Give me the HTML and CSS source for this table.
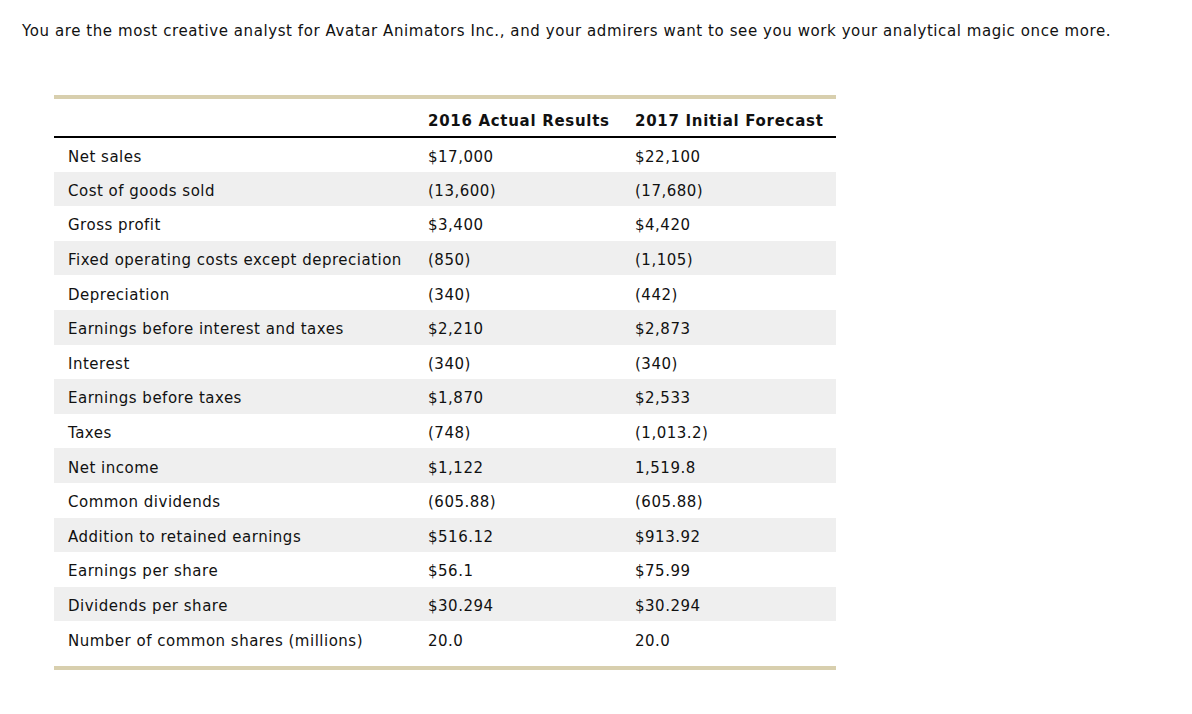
FILE: index.html
```html
<!DOCTYPE html>
<html>
<head>
<meta charset="utf-8">
<link rel="stylesheet" href="styles.css">
</head>
<body>
<div class="page">
  <p class="intro">You are the most creative analyst for Avatar Animators Inc., and your admirers want to see you work your analytical magic once more.</p>
  <div class="table-wrap">
    <table class="fin">
      <thead>
        <tr>
          <th class="c1"></th>
          <th class="c2">2016 Actual Results</th>
          <th class="c3">2017 Initial Forecast</th>
        </tr>
      </thead>
      <tbody>
        <tr><td>Net sales</td><td>$17,000</td><td>$22,100</td></tr>
        <tr><td>Cost of goods sold</td><td>(13,600)</td><td>(17,680)</td></tr>
        <tr><td>Gross profit</td><td>$3,400</td><td>$4,420</td></tr>
        <tr><td>Fixed operating costs except depreciation</td><td>(850)</td><td>(1,105)</td></tr>
        <tr><td>Depreciation</td><td>(340)</td><td>(442)</td></tr>
        <tr><td>Earnings before interest and taxes</td><td>$2,210</td><td>$2,873</td></tr>
        <tr><td>Interest</td><td>(340)</td><td>(340)</td></tr>
        <tr><td>Earnings before taxes</td><td>$1,870</td><td>$2,533</td></tr>
        <tr><td>Taxes</td><td>(748)</td><td>(1,013.2)</td></tr>
        <tr><td>Net income</td><td>$1,122</td><td>1,519.8</td></tr>
        <tr><td>Common dividends</td><td>(605.88)</td><td>(605.88)</td></tr>
        <tr><td>Addition to retained earnings</td><td>$516.12</td><td>$913.92</td></tr>
        <tr><td>Earnings per share</td><td>$56.1</td><td>$75.99</td></tr>
        <tr><td>Dividends per share</td><td>$30.294</td><td>$30.294</td></tr>
        <tr><td>Number of common shares (millions)</td><td>20.0</td><td>20.0</td></tr>
      </tbody>
    </table>
  </div>
</div>
</body>
</html>
```
FILE: styles.css
```css
html, body {
  margin: 0;
  padding: 0;
  background: #fff;
}
body {
  font-family: "DejaVu Sans", Verdana, sans-serif;
  font-size: 15px;
  letter-spacing: 0.5px;
  color: #111;
}
.page {
  padding: 22px 22px 0 22px;
}
.intro {
  margin: 0;
  line-height: 18px;
  letter-spacing: 0.58px;
}
.table-wrap {
  margin-top: 55px;
  margin-left: 32px;
  width: 782px;
  border-top: 4px solid #d8cfae;
  border-bottom: 4px solid #d8cfae;
  padding-bottom: 10px;
}
.fin {
  width: 782px;
  border-collapse: collapse;
  table-layout: fixed;
}
.fin th {
  font-weight: bold;
  letter-spacing: 0.7px;
  text-align: left;
  vertical-align: bottom;
  height: 38px;
  padding: 0 14px 6px 14px;
  border-bottom: 2px solid #000;
  box-sizing: border-box;
  white-space: nowrap;
  line-height: 18px;
}
.fin .c1 { width: 360px; }
.fin .c2 { width: 207px; }
.fin .c3 { width: 215px; }
.fin td {
  height: 34.6px;
  padding: 4px 14px 0 14px;
  box-sizing: border-box;
  vertical-align: middle;
  white-space: nowrap;
  line-height: 18px;
}
.fin tbody tr:nth-child(even) td {
  background: #efefef;
}
```
